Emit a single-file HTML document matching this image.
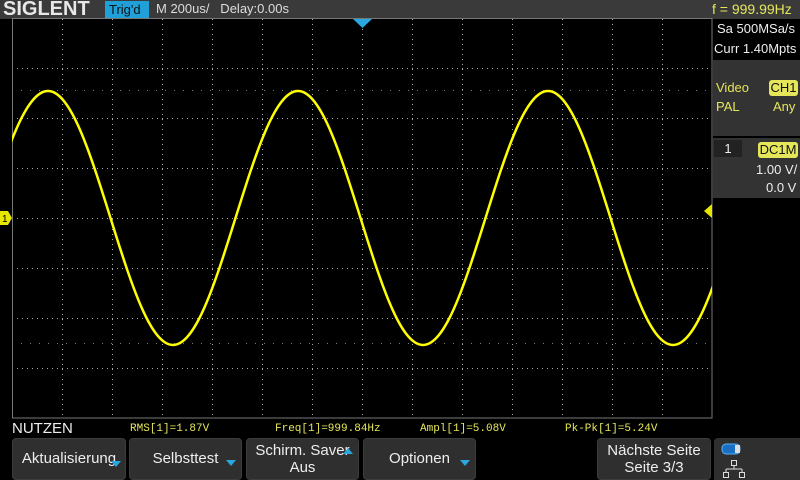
<!DOCTYPE html>
<html><head><meta charset="utf-8"><style>
*{margin:0;padding:0;box-sizing:border-box}
body{width:800px;height:480px;background:#000;position:relative;overflow:hidden;font-family:"Liberation Sans",sans-serif;color:#fff}
.a{position:absolute}
.btn{position:absolute;top:438px;height:42px;background:#2f2f2f;border:1px solid #3c3c3c;border-radius:4px;color:#eee;font-size:15px;text-align:center;line-height:17px}
.ar{position:absolute;width:0;height:0;border-left:5px solid transparent;border-right:5px solid transparent;border-top:6px solid #2aa6e0}
.m{position:absolute;top:423px;font-family:"Liberation Mono",monospace;font-size:11px;color:#e6e65a}
</style></head><body>
<div class="a" style="left:0;top:0;width:800px;height:19px;background:#3a3a3a"></div>
<div class="a" style="left:3px;top:-2px;font-size:20px;font-weight:bold;color:#e8e8e8">SIGLENT</div>
<div class="a" style="left:105px;top:1px;width:44px;height:17px;background:#1fa0d8;color:#111;font-size:13px;line-height:17px;padding-left:4px">Trig'd</div>
<div class="a" style="left:156px;top:1px;font-size:13px;color:#ddd">M 200us/&nbsp;&nbsp;&nbsp;Delay:0.00s</div>
<div class="a" style="left:712px;top:1px;font-size:14px;color:#e6e65a">f = 999.99Hz</div>
<div class="a" style="left:717px;top:21px;font-size:13px;color:#eee">Sa 500MSa/s</div>
<div class="a" style="left:714px;top:41px;font-size:13px;color:#eee">Curr 1.40Mpts</div>
<div class="a" style="left:713px;top:60px;width:87px;height:76px;background:#333"></div>
<div class="a" style="left:716px;top:80px;font-size:13px;color:#e6e65a">Video</div>
<div class="a" style="left:769px;top:80px;width:29px;height:16px;background:#e6e65a;border-radius:3px;color:#111;font-size:13px;text-align:center;line-height:16px">CH1</div>
<div class="a" style="left:716px;top:99px;font-size:13px;color:#e6e65a">PAL</div>
<div class="a" style="left:773px;top:99px;font-size:13px;color:#e6e65a">Any</div>
<div class="a" style="left:713px;top:138px;width:87px;height:60px;background:#333"></div>
<div class="a" style="left:714px;top:140px;width:28px;height:17px;background:#222;font-size:13px;text-align:center;line-height:17px;color:#eee">1</div>
<div class="a" style="left:758px;top:142px;width:40px;height:16px;background:#e6e65a;border-radius:3px;color:#111;font-size:13px;text-align:center;line-height:16px">DC1M</div>
<div class="a" style="left:756px;top:162px;font-size:13px;color:#eee">1.00 V/</div>
<div class="a" style="left:766px;top:180px;font-size:13px;color:#eee">0.0 V</div>
<svg class="a" style="left:0;top:0" width="800" height="480">
<g stroke="#aaa" stroke-width="1" stroke-dasharray="1 4" fill="none">
<path d="M62.5 19V418M112.5 19V418M162.5 19V418M212.5 19V418M262.5 19V418M312.5 19V418M362.5 19V418M412.5 19V418M462.5 19V418M512.5 19V418M562.5 19V418M612.5 19V418M662.5 19V418"/>
<path d="M12 68.5H712M12 118.5H712M12 168.5H712M12 218.5H712M12 268.5H712M12 318.5H712M12 368.5H712"/>
</g>
<g stroke="#777" stroke-width="1" stroke-dasharray="1 8" fill="none"><path d="M12 90.5H712M12 343.5H712"/></g>
<rect x="12.5" y="18.5" width="699.5" height="399.5" fill="none" stroke="#777"/>
<svg x="12" y="19" width="700" height="399" overflow="hidden">
<path transform="translate(-26.5,199) scale(39.79,-127)" vector-effect="non-scaling-stroke" fill="none" stroke="#ffff00" stroke-width="2.5"
d="M0 0C0.5251 0.5251 1.0046 1 1.5708 1C2.137 1 2.6165 0.5251 3.1416 0C3.6667 -0.5251 4.1462 -1 4.7124 -1C5.2786 -1 5.7581 -0.5251 6.2832 0
C6.8083 0.5251 7.2878 1 7.854 1C8.4202 1 8.8997 0.5251 9.4248 0C9.9499 -0.5251 10.4294 -1 10.9956 -1C11.5618 -1 12.0413 -0.5251 12.5664 0
C13.0915 0.5251 13.571 1 14.1372 1C14.7034 1 15.1829 0.5251 15.708 0C16.2331 -0.5251 16.7126 -1 17.2788 -1C17.845 -1 18.3245 -0.5251 18.8496 0"/>
</svg>
<polygon points="353,19 372,19 362.5,28" fill="#2aa6e0"/>
<polygon points="0,211 8,211 12,218 8,225 0,225" fill="#e6e600"/>
<text x="2" y="222" font-size="10" font-family="Liberation Sans" fill="#000">1</text>
<polygon points="712,204 712,218 704,211" fill="#e6e600"/>
</svg>
<div class="a" style="left:12px;top:420px;font-size:15px;color:#eee">NUTZEN</div>
<div class="m" style="left:130px">RMS[1]=1.87V</div>
<div class="m" style="left:275px">Freq[1]=999.84Hz</div>
<div class="m" style="left:420px">Ampl[1]=5.08V</div>
<div class="m" style="left:565px">Pk-Pk[1]=5.24V</div>
<div class="btn" style="left:12px;width:114px;line-height:40px">Aktualisierung<span class="ar" style="left:98px;top:22px"></span></div>
<div class="btn" style="left:129px;width:113px;line-height:40px">Selbsttest<span class="ar" style="left:96px;top:21px"></span></div>
<div class="btn" style="left:246px;width:113px;padding-top:3px">Schirm. Saver<br>Aus<span class="ar" style="left:96px;top:9px;border-top:none;border-bottom:6px solid #2aa6e0"></span></div>
<div class="btn" style="left:363px;width:113px;line-height:40px">Optionen<span class="ar" style="left:96px;top:21px"></span></div>
<div class="btn" style="left:597px;width:114px;padding-top:3px">Nächste Seite<br>Seite 3/3</div>
<div class="a" style="left:714px;top:438px;width:86px;height:42px;background:#2f2f2f;border-radius:4px 0 0 0"></div>
<svg class="a" style="left:714px;top:438px" width="86" height="42">
<rect x="8" y="6" width="18" height="10" rx="4" fill="#1a6fc0" stroke="#5ab0ff"/>
<rect x="21" y="7" width="5" height="8" fill="#ddd"/>
<g stroke="#ddd" fill="none"><rect x="17.5" y="22.5" width="5" height="5"/><path d="M20 27.5V31M12 31H28M12 31V34M28 31V34"/><rect x="9.5" y="34.5" width="5" height="5"/><rect x="25.5" y="34.5" width="5" height="5"/></g>
</svg>
</body></html>
